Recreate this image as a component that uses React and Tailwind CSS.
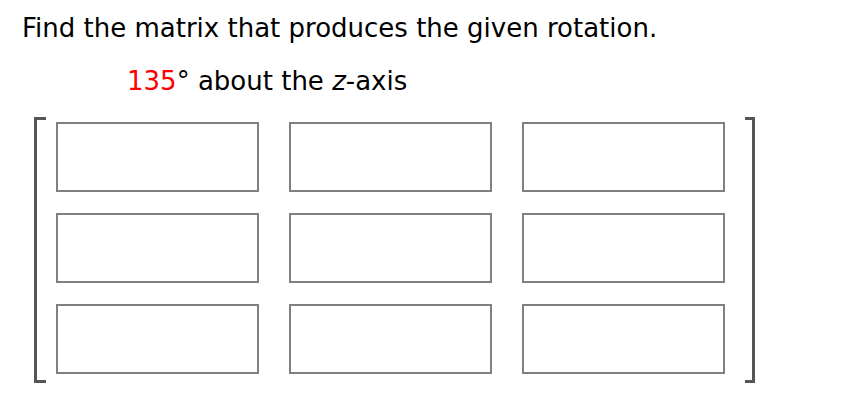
const App = () => {
    const cells = Array.from({ length: 9 });

    return (
        <div className="w-[860px] h-[410px] bg-white text-black font-['DejaVu_Sans',sans-serif]">
            <div className="pt-[13px] pl-[22px]">
                <p className="text-[26px] leading-[30px]">Find the matrix that produces the given rotation.</p>
                <p className="mt-[23px] ml-[105px] text-[26px] leading-[30px]">
                    <span className="text-[#ff0000]">135</span>° about the <i>z</i>-axis
                </p>
            </div>

            {/* matrix */}
            <div className="flex items-start mt-[21px] ml-[34px]">
                <div className="w-[12px] h-[266px] border-l-[3px] border-t-[3px] border-b-[3px] border-[#555]"></div>
                <div className="grid grid-cols-3 gap-x-[30px] gap-y-[21px] mt-[5px] ml-[10px]">
                    {cells.map((_, i) => (
                        <div key={i} className="w-[203px] h-[70px] border-2 border-[#808080] bg-white"></div>
                    ))}
                </div>
                <div className="w-[10px] h-[266px] ml-[20px] border-r-[3px] border-t-[3px] border-b-[3px] border-[#555]"></div>
            </div>
        </div>
    );
};

export default App;
